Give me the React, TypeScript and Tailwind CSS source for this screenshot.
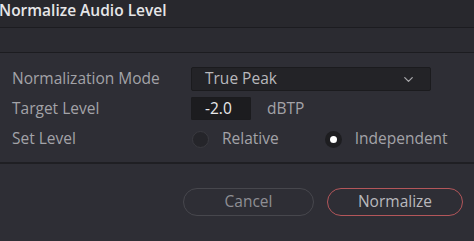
import { ChevronDown } from "lucide-react";

const font = { fontFamily: '"Open Sans", "Noto Sans", sans-serif' };

export default function App() {
  return (
    <div className="flex h-[241px] w-[474px] flex-col overflow-hidden bg-[#2e2e35] text-[15.5px]" style={font}>
      <div className="flex h-[27px] shrink-0 items-center bg-[#28282d] pb-[6px]">
        <h1 className="ml-[-1px] text-[15.5px] font-semibold text-[#e6e6e8]">Normalize Audio Level</h1>
      </div>
      <div className="h-[26px] shrink-0 border-y border-[#1c1c20] bg-[#2b2b31]" />
      <div className="flex h-[111px] shrink-0 flex-col border-b-2 border-[#1f1f23] pl-[12px] pt-[14px]">
        <div className="flex h-[24px] items-center">
          <span className="w-[179px] text-[#a3a3a8]">Normalization Mode</span>
          <div className="flex h-[24px] w-[240px] items-center justify-between rounded-[2px] border border-[#1b1b1e] bg-[#232327] pl-[13px] pr-[14px]">
            <span className="text-[#b8b8bc]">True Peak</span>
            <ChevronDown size={15} strokeWidth={2} className="text-[#a8a8ac]" />
          </div>
        </div>
        <div className="mt-[6px] flex h-[23px] items-center">
          <span className="w-[179px] text-[#a3a3a8]">Target Level</span>
          <div className="flex h-[23px] w-[60px] items-center rounded-[1px] border border-[#1b1b1e] bg-[#1c1c1f] pl-[13px]">
            <span className="text-[#e8e8ea]">-2.0</span>
          </div>
          <span className="ml-[16px] text-[#a3a3a8]">dBTP</span>
        </div>
        <div className="mt-[8px] flex h-[22px] items-center">
          <span className="w-[180px] text-[#a3a3a8]">Set Level</span>
          <span className="h-[17px] w-[17px] rounded-full border border-[#3a3a40] bg-[#25252a]" />
          <span className="ml-[13px] text-[#a3a3a8]">Relative</span>
          <span className="ml-[46px] flex h-[17px] w-[17px] items-center justify-center rounded-full bg-[#1d1d20]">
            <span className="h-[7px] w-[7px] rounded-full bg-white" />
          </span>
          <span className="ml-[13px] text-[#a3a3a8]">Independent</span>
        </div>
      </div>
      <div className="flex flex-1 justify-end gap-[13px] pr-[11px] pt-[24px]">
        <button className="h-[28px] w-[131px] rounded-full border border-[#47474d] text-[#8f8f94]">Cancel</button>
        <button className="h-[28px] w-[136px] rounded-full border-[1.5px] border-[#b3565a] text-[#b9b9bd]">Normalize</button>
      </div>
    </div>
  );
}
